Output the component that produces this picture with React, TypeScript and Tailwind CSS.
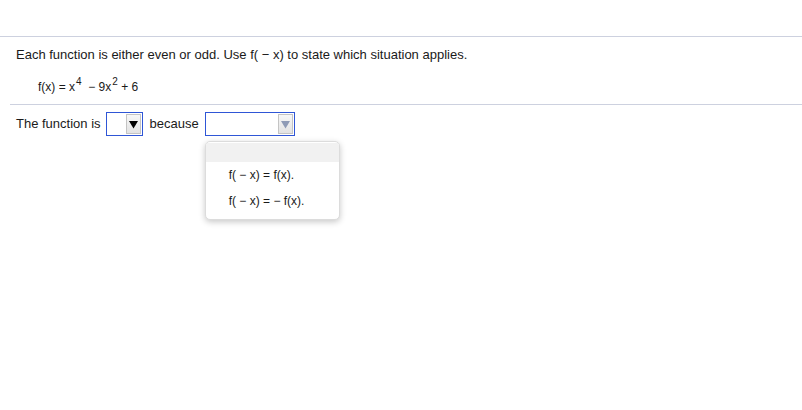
import React from 'react'

const font = { fontFamily: '"Liberation Sans", Arial, sans-serif' }

function Caret({ muted }: { muted?: boolean }) {
  return (
    <div className="flex h-[20px] w-[15px] items-center justify-center border border-[#c4c4c4] bg-gradient-to-b from-[#f7f7f7] to-[#e3e3e3]">
      <svg width="9" height="9" viewBox="0 0 9 9">
        <polygon points="0,1 9,1 4.5,8.5" fill={muted ? '#8f9bb6' : '#000'} />
      </svg>
    </div>
  )
}

export default function App() {
  const [open] = React.useState(true)
  return (
    <div className="min-h-[410px] w-[802px] bg-white text-[13px] text-[#1a1a1a]" style={font}>
      <div className="h-[36px]" />
      <div className="border-t border-[#cdd1df]" />
      <div className="pl-[16px] pt-[9px] leading-[18px]">
        Each function is either even or odd. Use f( − x) to state which situation applies.
      </div>
      <div className="pl-[38px] pt-[14px] text-[12px] leading-[18px]">
        f(x) = x<sup className="top-[-6px] ml-[1px] text-[10px]">4</sup>&nbsp; − 9x<sup className="top-[-6px] ml-[1px] text-[10px]">2</sup>&nbsp;+ 6
      </div>
      <div className="ml-[10px] mt-[8px] border-t border-[#cdd1df]" />
      <div className="flex items-center pl-[16px] pt-[7px]">
        <span className="leading-[18px]">The function is</span>
        <div className="ml-[5px] flex h-[24px] w-[37px] items-center justify-end border border-[#2f56d6] pr-[1px]">
          <Caret />
        </div>
        <span className="ml-[7px] leading-[18px]">because</span>
        <div className="relative ml-[6px]">
          <div className="flex h-[24px] w-[90px] items-center justify-end border border-[#2f56d6] pr-[1px]">
            <Caret muted />
          </div>
          {open && (
            <div className="absolute left-0 top-[29px] z-10 w-[135px] overflow-hidden rounded-[5px] border border-[#dcdcdc] bg-white pb-[5px] shadow-[0_2px_6px_rgba(0,0,0,0.22)]">
              <div className="mt-[1px] h-[19px] bg-[#f1f1f1]" />
              <div className="pl-[23px] text-[12px] leading-[26px]">f( − x) = f(x).</div>
              <div className="pl-[23px] text-[12px] leading-[26px]">f( − x) = − f(x).</div>
            </div>
          )}
        </div>
      </div>
    </div>
  )
}
